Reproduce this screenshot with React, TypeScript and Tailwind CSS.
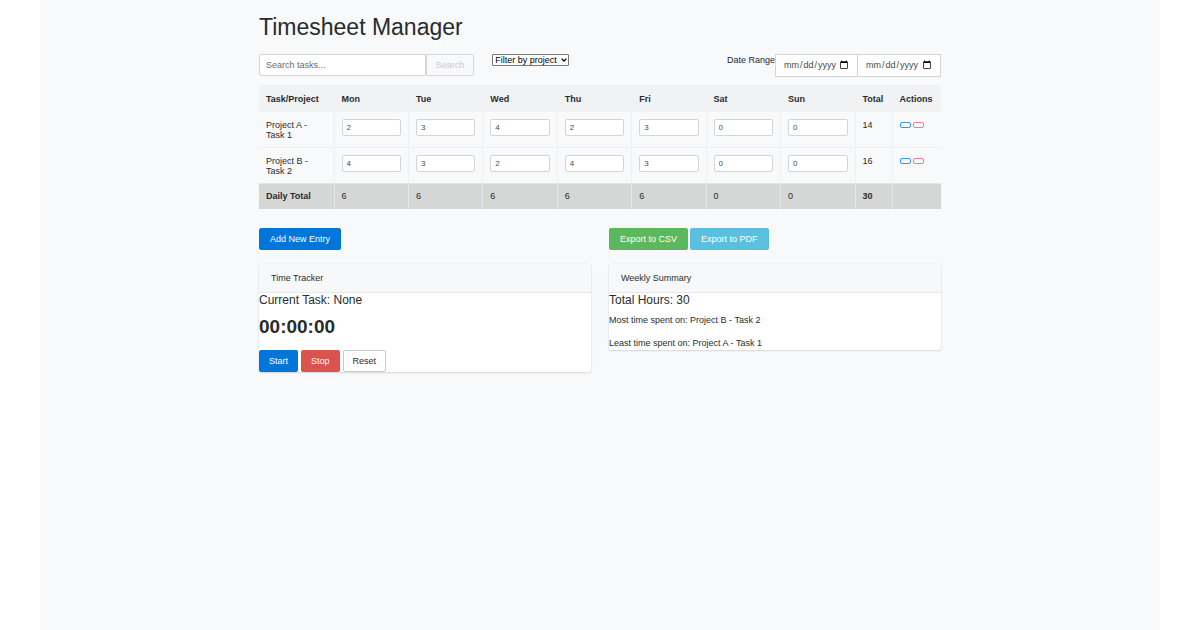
import React, { useState } from 'react';

interface Entry {
  name: string;
  hours: number[];
}

const days = ['Mon', 'Tue', 'Wed', 'Thu', 'Fri', 'Sat', 'Sun'];

const initialEntries: Entry[] = [
  { name: 'Project A - Task 1', hours: [2, 3, 4, 2, 3, 0, 0] },
  { name: 'Project B - Task 2', hours: [4, 3, 2, 4, 3, 0, 0] },
];

const sum = (values: number[]) => values.reduce((a, b) => a + b, 0);

const btn = 'h-[22px] rounded-[2px] border text-[9px] leading-[14px]';
const cell = 'border-l border-t border-[#eff0f2] px-[7px] text-left first:border-l-0';
const totalCell = 'border-l border-t border-[#e4e6e6] px-[7px] text-left first:border-l-0';
const dateInput =
  'h-[23px] w-[83px] border border-[#d3d5d7] bg-white pb-[2px] pl-[7px] pr-[8px] text-[9px] text-[#464a4c] [&::-webkit-calendar-picker-indicator]:m-0 [&::-webkit-calendar-picker-indicator]:ml-auto [&::-webkit-calendar-picker-indicator]:h-[10px] [&::-webkit-calendar-picker-indicator]:w-[10px] [&::-webkit-calendar-picker-indicator]:p-0';

const Card: React.FC<{ title: string; children: React.ReactNode }> = ({ title, children }) => (
  <section className="rounded-[2px] bg-white shadow-[0_0_1px_rgba(0,0,0,0.2),0_1px_2px_rgba(0,0,0,0.12)]">
    <h2 className="rounded-t-[2px] border-b border-[#e6e8ea] bg-[#f7f8fa] px-[12px] py-[7px] text-[9px] leading-[14px]">{title}</h2>
    {children}
  </section>
);

export default function App() {
  const [entries, setEntries] = useState(initialEntries);

  const setHours = (row: number, day: number, value: number) => {
    setEntries(entries.map((entry, i) =>
      i === row ? { ...entry, hours: entry.hours.map((h, d) => (d === day ? value : h)) } : entry
    ));
  };

  const total = sum(entries.map((entry) => sum(entry.hours)));

  return (
    <div className="mx-10 min-h-screen bg-[#f8f9fb] font-['Liberation_Sans',sans-serif] text-[9px] leading-[14px] text-[#292b2c]">
      <main className="mx-auto max-w-[700px] px-[9px] pt-[14px]">
        <h1 className="mb-[14px] text-[23px] leading-[26px]">Timesheet Manager</h1>

        {/* Filters */}
        <div className="grid grid-cols-3 items-start gap-[18px]">
          <div className="flex">
            <input
              type="text"
              aria-label="Search tasks"
              placeholder="Search tasks..."
              className="h-[22px] min-w-0 flex-1 rounded-l-[2px] border border-[#d3d5d7] bg-white px-[6px] text-[9px] placeholder:text-[#636c72]"
            />
            <button disabled className={`${btn} border-[#d6d8da] px-[9px] text-[#c9cbcd]`}>Search</button>
          </div>
          <div className="relative h-[12px] w-[77px]">
            <select
              aria-label="Filter by project"
              className="block h-[12px] w-full appearance-none rounded-[1px] border border-[#767676] bg-white pl-[2px] text-[9px] leading-[10px] text-black"
            >
              <option>Filter by project</option>
              <option>Project A</option>
              <option>Project B</option>
            </select>
            <svg viewBox="0 0 6 4" className="pointer-events-none absolute right-[2px] top-[4px] h-[4px] w-[6px]">
              <path d="M0.6 0.6 L3 3 L5.4 0.6" fill="none" stroke="black" strokeWidth="1.3" />
            </svg>
          </div>
          <div className="flex justify-end">
            <label htmlFor="date-from" className="whitespace-nowrap leading-[12px]">Date Range</label>
            <input id="date-from" type="date" className={dateInput} />
            <input type="date" aria-label="Date to" className={`${dateInput} border-l-0`} />
          </div>
        </div>

        {/* Weekly grid */}
        <table className="mt-[8px] w-full table-fixed border-collapse">
          <colgroup>
            <col className="w-[75px]" />
            {days.map((day) => <col key={day} />)}
            <col className="w-[37px]" />
            <col className="w-[49px]" />
          </colgroup>
          <thead className="bg-[#f1f2f4]">
            <tr className="h-[26px]">
              <th className={cell}>Task/Project</th>
              {days.map((day) => <th key={day} className={cell}>{day}</th>)}
              <th className={cell}>Total</th>
              <th className={cell}>Actions</th>
            </tr>
          </thead>
          <tbody>
            {entries.map((entry, row) => (
              <tr key={entry.name} className="h-[36px] align-top">
                <td className={`${cell} pr-[14px] pt-[8px] leading-[10px]`}>{entry.name}</td>
                {entry.hours.map((h, day) => (
                  <td key={days[day]} className={`${cell} pt-[7px]`}>
                    <input
                      type="text"
                      inputMode="numeric"
                      aria-label={`${entry.name} ${days[day]}`}
                      value={h}
                      onChange={(e) => setHours(row, day, Number(e.target.value) || 0)}
                      className="block h-[17px] w-full rounded-[2px] border border-[#d3d5d7] bg-white px-[4px] text-[8px] text-[#464a4c]"
                    />
                  </td>
                ))}
                <td className={`${cell} pt-[8px] leading-[10px]`}>{sum(entry.hours)}</td>
                <td className={`${cell} pt-[10px]`}>
                  <div className="flex gap-[2px]">
                    <button aria-label="Edit" className="h-[6px] w-[11px] rounded-[2px] border border-[#3d94e0]" />
                    <button aria-label="Delete" className="h-[6px] w-[11px] rounded-[2px] border border-[#e48582]" />
                  </div>
                </td>
              </tr>
            ))}
            <tr className="h-[25px] bg-[#d5d7d6]">
              <th className={totalCell}>Daily Total</th>
              {days.map((day, d) => (
                <td key={day} className={totalCell}>{sum(entries.map((entry) => entry.hours[d]))}</td>
              ))}
              <td className={`${totalCell} font-bold`}>{total}</td>
              <td className={totalCell} />
            </tr>
          </tbody>
        </table>

        <div className="mt-[19px] grid grid-cols-2 items-start gap-x-[18px] gap-y-[14px]">
          <div>
            <button className={`${btn} border-[#0275d8] bg-[#0275d8] px-[10px] text-white`}>Add New Entry</button>
          </div>
          <div className="flex gap-[2px]">
            <button className={`${btn} border-[#5cb85c] bg-[#5cb85c] px-[10px] text-white`}>Export to CSV</button>
            <button className={`${btn} border-[#5bc0de] bg-[#5bc0de] px-[10px] text-white`}>Export to PDF</button>
          </div>

          <Card title="Time Tracker">
            <h3 className="text-[12px] leading-[14px]">Current Task: None</h3>
            <p className="mt-[9px] text-[19px] font-bold leading-[22px]">00:00:00</p>
            <div className="mt-[12px] flex gap-[3px]">
              <button className={`${btn} border-[#0275d8] bg-[#0275d8] px-[9px] text-white`}>Start</button>
              <button className={`${btn} border-[#d9534f] bg-[#d9534f] px-[9px] text-white`}>Stop</button>
              <button className={`${btn} border-[#cccccc] bg-white px-[9px]`}>Reset</button>
            </div>
          </Card>

          <Card title="Weekly Summary">
            <h3 className="text-[12px] leading-[14px]">Total Hours: {total}</h3>
            <p className="mt-[6px]">Most time spent on: Project B - Task 2</p>
            <p className="mt-[9px]">Least time spent on: Project A - Task 1</p>
          </Card>
        </div>
      </main>
    </div>
  );
}
